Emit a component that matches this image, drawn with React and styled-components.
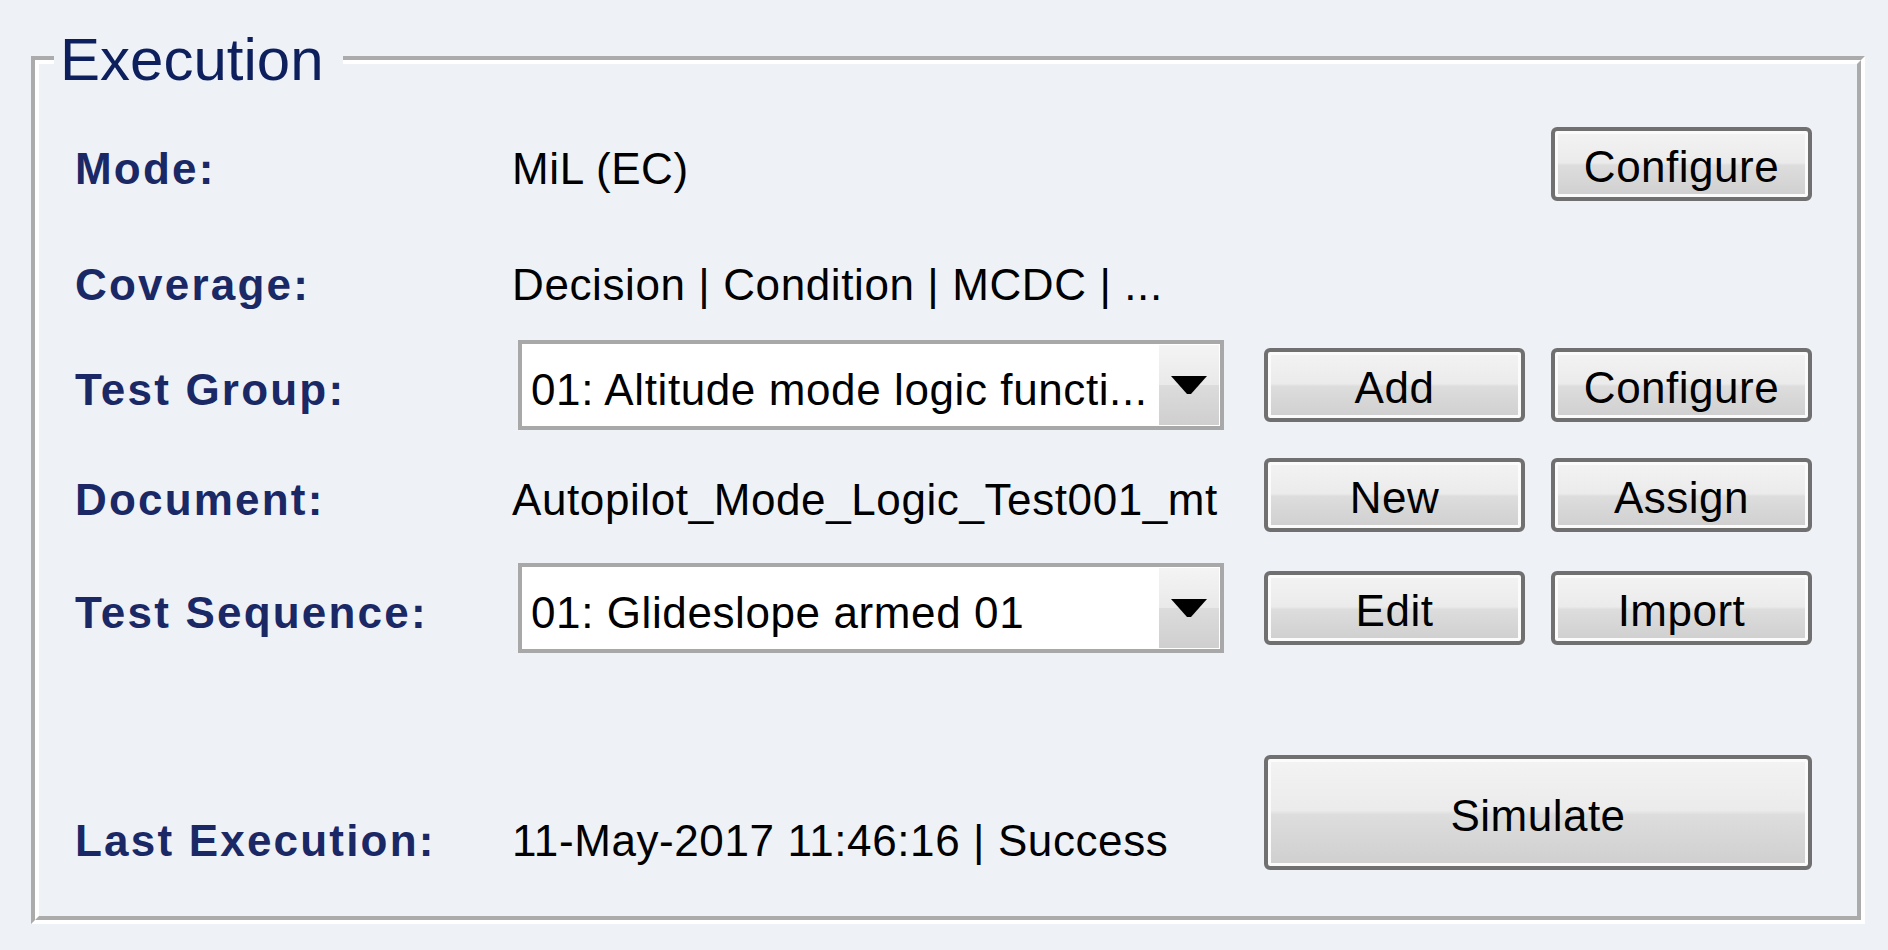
import React from "react";
import styled, { createGlobalStyle } from "styled-components";

const GlobalStyle = createGlobalStyle`
  html, body {
    margin: 0;
    padding: 0;
    background: #eef2f7;
  }
  body {
    font-family: "Liberation Sans", Arial, sans-serif;
  }
`;

const Frame = styled.fieldset`
  box-sizing: border-box;
  width: 1834px;
  margin: 28px 0 0 31px;
  padding: 14px 45px 46px 36px;
  border: 8px groove #ffffff;
  min-inline-size: 0;
`;

const Title = styled.legend`
  margin-left: -21px;
  padding: 0 19px 0 6px;
  font-size: 60px;
  line-height: 64px;
  color: #0d1f5c;
`;

const Grid = styled.div`
  display: grid;
  grid-template-columns: 437px 712px 301px 287px;
  grid-template-rows: 116px 116px 94px 126px 100px 97px 115px;
  align-items: center;
`;

const Label = styled.div`
  grid-column: 1;
  padding-top: ${(p) => (p.bottom ? "0" : "9px")};
  margin-bottom: ${(p) => (p.bottom ? "4px" : "0")};
  align-self: ${(p) => (p.bottom ? "end" : "center")};
  font-size: 44px;
  line-height: 50px;
  font-weight: bold;
  letter-spacing: 2.2px;
  color: #1b2866;
  white-space: nowrap;
`;

const Value = styled.div`
  grid-column: 2;
  padding-top: ${(p) => (p.bottom ? "0" : "9px")};
  margin-bottom: ${(p) => (p.bottom ? "4px" : "0")};
  align-self: ${(p) => (p.bottom ? "end" : "center")};
  font-size: 44px;
  line-height: 50px;
  letter-spacing: 0.6px;
  color: #000;
  white-space: nowrap;
`;

const Select = styled.div`
  grid-column: 2;
  box-sizing: border-box;
  display: flex;
  align-items: stretch;
  width: 706px;
  height: 90px;
  margin-left: 6px;
  border: 4px solid #a8a8a8;
  background: #fff;
`;

const SelectText = styled.div`
  flex: 1;
  display: flex;
  align-items: center;
  padding: 10px 0 0 9px;
  font-size: 44px;
  letter-spacing: 0.6px;
  color: #000;
  white-space: nowrap;
  overflow: hidden;
`;

const Arrow = styled.div`
  width: 60px;
  margin: 1px;
  display: flex;
  align-items: center;
  justify-content: center;
  background: linear-gradient(#f4f4f4 0%, #e9e9e9 50%, #dcdcdc 50%, #cfcfcf 100%);
`;

const ButtonCell = styled.div`
  grid-column: ${(p) => p.col};
  display: flex;
  padding-left: ${(p) => p.pad}px;
`;

const Button = styled.button`
  box-sizing: border-box;
  flex: 1;
  height: ${(p) => p.h}px;
  padding: 6px 0 0;
  border: 4px solid #707070;
  border-radius: 6px;
  box-shadow: inset 0 0 0 3px #fbfbfb;
  background: linear-gradient(#f3f3f3 0%, #ebebeb 48%, #dddddd 52%, #cfcfcf 100%);
  font-family: "Liberation Sans", Arial, sans-serif;
  font-size: 44px;
  letter-spacing: 0.5px;
  color: #000;
`;

const Spacer = styled.div`
  grid-column: 1 / -1;
`;

const Triangle = () => (
  <svg width="36" height="18" viewBox="0 0 36 18">
    <polygon points="0,0 36,0 20,18 16,18" fill="#000" />
  </svg>
);

const Btn = ({ col, pad, h = 74, children }) => (
  <ButtonCell col={col} pad={pad}>
    <Button h={h}>{children}</Button>
  </ButtonCell>
);

const Dropdown = ({ children }) => (
  <Select>
    <SelectText>{children}</SelectText>
    <Arrow>
      <Triangle />
    </Arrow>
  </Select>
);

export default function App() {
  return (
    <>
      <GlobalStyle />
      <Frame>
        <Title>Execution</Title>
        <Grid>
          <Label>Mode:</Label>
          <Value>MiL (EC)</Value>
          <Btn col={4} pad={26}>Configure</Btn>

          <Label>Coverage:</Label>
          <Value>Decision | Condition | MCDC | ...</Value>

          <Label>Test Group:</Label>
          <Dropdown>01: Altitude mode logic functi...</Dropdown>
          <Btn col={3} pad={40}>Add</Btn>
          <Btn col={4} pad={26}>Configure</Btn>

          <Label>Document:</Label>
          <Value>Autopilot_Mode_Logic_Test001_mt</Value>
          <Btn col={3} pad={40}>New</Btn>
          <Btn col={4} pad={26}>Assign</Btn>

          <Label>Test Sequence:</Label>
          <Dropdown>01: Glideslope armed 01</Dropdown>
          <Btn col={3} pad={40}>Edit</Btn>
          <Btn col={4} pad={26}>Import</Btn>

          <Spacer />

          <Label bottom>Last Execution:</Label>
          <Value bottom>11-May-2017 11:46:16 | Success</Value>
          <Btn col="3 / 5" pad={40} h={115}>Simulate</Btn>
        </Grid>
      </Frame>
    </>
  );
}
